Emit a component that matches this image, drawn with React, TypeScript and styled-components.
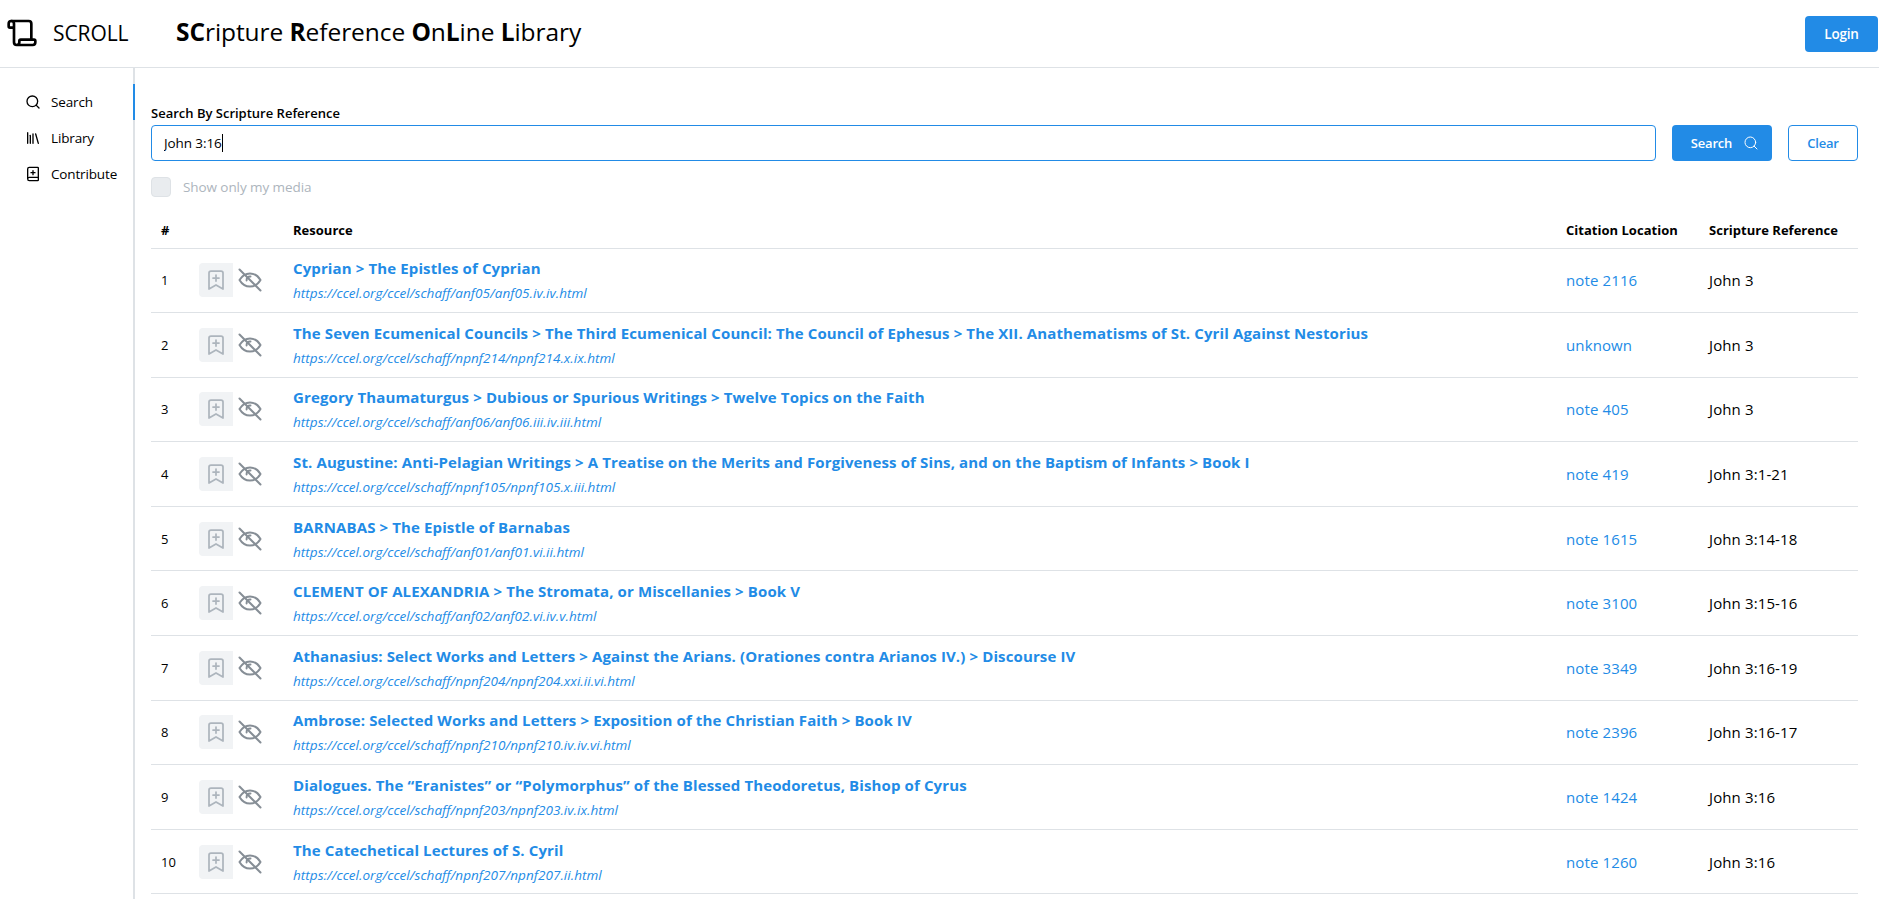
import React from "react";
import styled, { createGlobalStyle } from "styled-components";
import { Search, Library, BookPlus, Scroll, BookmarkPlus } from "lucide-react";

const Global = createGlobalStyle`
  html, body { margin: 0; padding: 0; height: 100%; overflow: hidden; background: #fff; }
  body { font-family: "Open Sans", "Noto Sans", "Liberation Sans", sans-serif; color: #000; }
  * { box-sizing: border-box; }
`;

const Page = styled.div`
  display: flex;
  flex-direction: column;
  height: 899px;
  overflow: hidden;
`;
const Header = styled.header`
  height: 68px;
  flex: none;
  display: flex;
  align-items: center;
  border-bottom: 1px solid #dee2e6;
  padding: 0 1px 0 6px;
`;
const Brand = styled.div`
  display: flex;
  align-items: center;
  width: 170px;
  font-size: 21px;
  gap: 15px;
  letter-spacing: -0.1px;
  margin-top: -2px;
`;
const Title = styled.h1`
  margin: -4px 0 0;
  flex: 1;
  font-size: 24.5px;
  font-weight: 400;
  letter-spacing: -0.07px;
  b { font-weight: 700; }
`;
const Primary = styled.button<{ $w: number }>`
  display: inline-flex;
  align-items: center;
  justify-content: center;
  gap: 11px;
  background: #228be6;
  color: #fff;
  border: 0;
  border-radius: 4px;
  font: 600 13px "Open Sans", sans-serif;
  letter-spacing: -0.2px;
  height: 36px;
  width: ${(p) => p.$w}px;
`;
const LoginButton = styled(Primary)`
  font-size: 13.5px;
`;
const SearchButton = styled(Primary)`
  padding: 0 0 0 6px;
`;
const Body = styled.div`
  flex: 1;
  display: flex;
  min-height: 0;
`;
const Side = styled.nav`
  width: 135px;
  flex: none;
  border-right: 2px solid #dee2e6;
  padding-top: 16px;
  position: relative;
  &::after {
    content: "";
    position: absolute;
    right: -2px;
    top: 16px;
    width: 2px;
    height: 36px;
    background: #228be6;
  }
`;
const NavItem = styled.div`
  height: 36px;
  display: flex;
  align-items: center;
  padding-left: 25px;
  gap: 10px;
  font-size: 13.5px;
  letter-spacing: -0.15px;
`;
const Main = styled.main`
  flex: 1;
  min-width: 0;
  padding: 36px 21px 0 16px;
`;
const FieldLabel = styled.label`
  display: block;
  font-size: 13px;
  font-weight: 600;
  line-height: 18px;
  margin-bottom: 3px;
`;
const SearchRow = styled.div`
  display: flex;
  gap: 16px;
`;
const InputWrap = styled.div`
  flex: 1;
  position: relative;
`;
const Input = styled.input`
  width: 100%;
  height: 36px;
  display: block;
  border: 1px solid #228be6;
  border-radius: 4px;
  outline: 0;
  padding: 0 12px;
  font: 400 13.5px "Open Sans", sans-serif;
  letter-spacing: -0.1px;
  color: #000;
`;
const Caret = styled.span`
  position: absolute;
  left: 71px;
  top: 9px;
  width: 1px;
  height: 18px;
  background: #000;
`;
const Outline = styled.button`
  width: 70px;
  height: 36px;
  background: #fff;
  border: 1px solid #228be6;
  border-radius: 4px;
  color: #228be6;
  font: 600 13px "Open Sans", sans-serif;
  letter-spacing: -0.2px;
`;
const CheckRow = styled.div`
  display: flex;
  align-items: center;
  gap: 12px;
  margin-top: 16px;
  height: 20px;
  font-size: 13.5px;
  letter-spacing: -0.08px;
  color: #adb5bd;
`;
const Check = styled.span`
  width: 20px;
  height: 20px;
  background: #e9ecef;
  border: 1px solid #dee2e6;
  border-radius: 4px;
`;
const Table = styled.table`
  width: 100%;
  margin-top: 16px;
  border-collapse: collapse;
  table-layout: fixed;
`;
const Th = styled.th`
  height: 35px;
  padding: 0 10px;
  text-align: left;
  font-size: 13px;
  font-weight: 700;
  letter-spacing: 0.02px;
  border-bottom: 1px solid #dee2e6;
`;
const Tr = styled.tr`
  height: 64.6px;
  border-bottom: 1px solid #dee2e6;
`;
const Td = styled.td`
  padding: 0 10px;
  font-size: 15px;
  letter-spacing: 0.12px;
  vertical-align: middle;
`;
const NumCell = styled(Td)`
  font-size: 13px;
  letter-spacing: 0;
`;
const Actions = styled.div`
  display: flex;
  align-items: center;
  gap: 5px;
  color: #868e96;
`;
const Mark = styled.span`
  width: 34px;
  height: 34px;
  display: flex;
  align-items: center;
  justify-content: center;
  background: #f1f3f5;
  border-radius: 4px 0 0 4px;
  color: #adb5bd;
`;
const ResTitle = styled.div`
  color: #228be6;
  font-size: 15px;
  font-weight: 700;
  line-height: 20px;
  margin-top: -1px;
  white-space: nowrap;
`;
const ResUrl = styled.div`
  color: #228be6;
  font-size: 13.5px;
  font-style: italic;
  line-height: 16px;
  margin-top: 7px;
  letter-spacing: 0.04px;
`;
const Cite = styled.span`
  color: #228be6;
`;

const EyeSlash = () => (
  <svg width="24" height="24" viewBox="0 0 24 24" fill="none" stroke="currentColor" strokeWidth="2" strokeLinecap="round" strokeLinejoin="round">
    <path d="M1.5 12c2.6-4.400 6.100-6.600 10.500-6.600S19.900 7.600 22.500 12c-2.600 4.400-6.100 6.600-10.500 6.600S4.100 16.400 1.500 12z" />
    <path d="M8.600 12.400a3.500 3.500 0 0 1 3.900-3.900" />
    <path d="M1.500 1.500 22.500 22.500" />
  </svg>
);

const rows = [
  ["Cyprian > The Epistles of Cyprian", "https://ccel.org/ccel/schaff/anf05/anf05.iv.iv.html", "note 2116", "John 3"],
  ["The Seven Ecumenical Councils > The Third Ecumenical Council: The Council of Ephesus > The XII. Anathematisms of St. Cyril Against Nestorius", "https://ccel.org/ccel/schaff/npnf214/npnf214.x.ix.html", "unknown", "John 3"],
  ["Gregory Thaumaturgus > Dubious or Spurious Writings > Twelve Topics on the Faith", "https://ccel.org/ccel/schaff/anf06/anf06.iii.iv.iii.html", "note 405", "John 3"],
  ["St. Augustine: Anti-Pelagian Writings > A Treatise on the Merits and Forgiveness of Sins, and on the Baptism of Infants > Book I", "https://ccel.org/ccel/schaff/npnf105/npnf105.x.iii.html", "note 419", "John 3:1-21"],
  ["BARNABAS > The Epistle of Barnabas", "https://ccel.org/ccel/schaff/anf01/anf01.vi.ii.html", "note 1615", "John 3:14-18"],
  ["CLEMENT OF ALEXANDRIA > The Stromata, or Miscellanies > Book V", "https://ccel.org/ccel/schaff/anf02/anf02.vi.iv.v.html", "note 3100", "John 3:15-16"],
  ["Athanasius: Select Works and Letters > Against the Arians. (Orationes contra Arianos IV.) > Discourse IV", "https://ccel.org/ccel/schaff/npnf204/npnf204.xxi.ii.vi.html", "note 3349", "John 3:16-19"],
  ["Ambrose: Selected Works and Letters > Exposition of the Christian Faith > Book IV", "https://ccel.org/ccel/schaff/npnf210/npnf210.iv.iv.vi.html", "note 2396", "John 3:16-17"],
  ["Dialogues. The “Eranistes” or “Polymorphus” of the Blessed Theodoretus, Bishop of Cyrus", "https://ccel.org/ccel/schaff/npnf203/npnf203.iv.ix.html", "note 1424", "John 3:16"],
  ["The Catechetical Lectures of S. Cyril", "https://ccel.org/ccel/schaff/npnf207/npnf207.ii.html", "note 1260", "John 3:16"],
];

export default function App() {
  return (
    <Page>
      <Global />
      <Header>
        <Brand>
          <Scroll size={32} strokeWidth={2} />
          <span>SCROLL</span>
        </Brand>
        <Title>
          <b>SC</b>ripture <b>R</b>eference <b>O</b>n<b>L</b>ine <b>L</b>ibrary
        </Title>
        <LoginButton $w={73}>Login</LoginButton>
      </Header>
      <Body>
        <Side>
          <NavItem><Search size={16} />Search</NavItem>
          <NavItem><Library size={16} />Library</NavItem>
          <NavItem><BookPlus size={16} />Contribute</NavItem>
        </Side>
        <Main>
          <FieldLabel>Search By Scripture Reference</FieldLabel>
          <SearchRow>
            <InputWrap>
              <Input defaultValue="John 3:16" />
              <Caret />
            </InputWrap>
            <SearchButton $w={100}>Search <Search size={16} strokeWidth={1.5} /></SearchButton>
            <Outline>Clear</Outline>
          </SearchRow>
          <CheckRow><Check />Show only my media</CheckRow>
          <Table>
            <colgroup>
              <col style={{ width: 38 }} />
              <col style={{ width: 94 }} />
              <col />
              <col style={{ width: 143 }} />
              <col style={{ width: 159 }} />
            </colgroup>
            <thead>
              <tr>
                <Th>#</Th>
                <Th />
                <Th>Resource</Th>
                <Th>Citation Location</Th>
                <Th>Scripture Reference</Th>
              </tr>
            </thead>
            <tbody>
              {rows.map((r, i) => (
                <Tr key={i}>
                  <NumCell>{i + 1}</NumCell>
                  <Td>
                    <Actions>
                      <Mark><BookmarkPlus size={24} strokeWidth={1.75} /></Mark>
                      <EyeSlash />
                    </Actions>
                  </Td>
                  <Td>
                    <ResTitle>{r[0]}</ResTitle>
                    <ResUrl>{r[1]}</ResUrl>
                  </Td>
                  <Td><Cite>{r[2]}</Cite></Td>
                  <Td>{r[3]}</Td>
                </Tr>
              ))}
            </tbody>
          </Table>
        </Main>
      </Body>
    </Page>
  );
}
